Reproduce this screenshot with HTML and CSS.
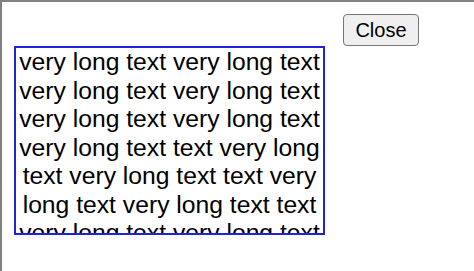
FILE: index.html
```html
<!DOCTYPE html>
<html lang="en">
<head>
<meta charset="utf-8">
<title>Dialog</title>
<link rel="stylesheet" href="styles.css">
</head>
<body>
<div class="frame">
  <div class="header">
    <button class="close-btn" type="button">Close</button>
  </div>
  <div class="box">very long text very long text very long text very long text very long text very long text very long text text very long text very long text text very long text very long text text very long text very long text very long text very long text</div>
</div>
</body>
</html>
```
FILE: styles.css
```css
html, body {
  margin: 0;
  padding: 0;
  background: #ffffff;
}

body {
  font-family: "Liberation Sans", Arial, sans-serif;
  color: #000000;
}

.frame {
  box-sizing: border-box;
  height: 100vh;
  border-top: 2px solid #808080;
  border-left: 2px solid #808080;
  padding: 12px 0 0 12px;
}

.header {
  width: 405px;
  display: flex;
  justify-content: flex-end;
}

.close-btn {
  box-sizing: border-box;
  width: 76px;
  height: 32px;
  padding: 0;
  font-family: "Liberation Sans", Arial, sans-serif;
  font-size: 20px;
  color: #000000;
  background: #efefef;
  border: 1px solid #767676;
  border-radius: 4px;
}

.box {
  box-sizing: border-box;
  width: 311px;
  height: 189px;
  border: 2px solid #2222d6;
  overflow: hidden;
  text-align: center;
  font-size: 24.7px;
  line-height: 28.5px;
}
```
